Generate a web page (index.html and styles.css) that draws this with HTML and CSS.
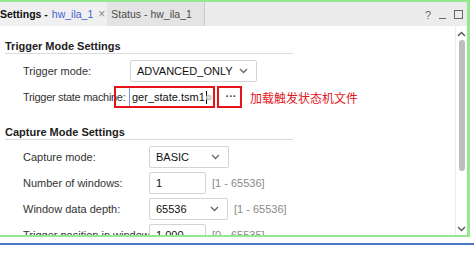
FILE: index.html
```html
<!DOCTYPE html>
<html lang="en">
<head>
    <meta charset="UTF-8">
    <title>Settings - hw_ila_1</title>
    <link rel="stylesheet" href="styles.css">
</head>
<body>
    <div class="window">
        <div class="tabbar">
            <div class="tab active">
                <b>Settings -</b><span class="tab-link">hw_ila_1</span><span class="tab-close">×</span>
            </div>
            <div class="tab">Status - hw_ila_1</div>
            <div class="tab-tools">
                <span class="help">?</span>
                <span class="minimize"></span>
                <span class="maximize"></span>
            </div>
        </div>

        <div class="pane">
            <div class="settings">
                <div class="section">
                    <div class="section-title">Trigger Mode Settings</div>
                    <div class="rows rows-trigger">
                        <label>Trigger mode:</label>
                        <div class="cell">
                            <div class="select w-mode">ADVANCED_ONLY
                                <svg class="chevron" width="9" height="6" viewBox="0 0 9 6"><path d="M1 1l3.5 3.5L8 1" fill="none" stroke="#666" stroke-width="1.3"/></svg>
                            </div>
                        </div>

                        <label class="label-tight">Trigger state machine:</label>
                        <div class="cell file-cell">
                            <div class="path-input">
                                <span class="path-text">ger_state.tsm1</span><span class="caret"></span>
                                <svg class="clear" width="11" height="11" viewBox="0 0 11 11"><circle cx="5.5" cy="5.5" r="5.5" fill="#c6c6c6"/><path d="M3.3 3.3l4.4 4.4M7.7 3.3l-4.4 4.4" stroke="#fff" stroke-width="1.4"/></svg>
                            </div>
                            <div class="browse-btn">···</div>
                            <span class="note">加载触发状态机文件</span>
                            <div class="mark mark-path"></div>
                            <div class="mark mark-browse"></div>
                        </div>
                    </div>
                </div>

                <div class="section">
                    <div class="section-title">Capture Mode Settings</div>
                    <div class="rows rows-capture">
                        <label>Capture mode:</label>
                        <div class="cell">
                            <div class="select w-capture">BASIC
                                <svg class="chevron" width="9" height="6" viewBox="0 0 9 6"><path d="M1 1l3.5 3.5L8 1" fill="none" stroke="#666" stroke-width="1.3"/></svg>
                            </div>
                        </div>

                        <label>Number of windows:</label>
                        <div class="cell">
                            <div class="text-input w-num">1</div>
                            <span class="range">[1 - 65536]</span>
                        </div>

                        <label>Window data depth:</label>
                        <div class="cell">
                            <div class="select w-depth">65536
                                <svg class="chevron" width="9" height="6" viewBox="0 0 9 6"><path d="M1 1l3.5 3.5L8 1" fill="none" stroke="#666" stroke-width="1.3"/></svg>
                            </div>
                            <span class="range">[1 - 65536]</span>
                        </div>

                        <label>Trigger position in window:</label>
                        <div class="cell">
                            <div class="text-input w-num">1,000</div>
                            <span class="range">[0 - 65535]</span>
                        </div>
                    </div>
                </div>
            </div>

            <div class="scrollbar">
                <svg class="arrow" width="9" height="6" viewBox="0 0 9 6"><path d="M1 5l3.5-3.5L8 5" fill="none" stroke="#555" stroke-width="1.4"/></svg>
                <div class="thumb"></div>
                <div class="track"></div>
                <svg class="arrow" width="9" height="6" viewBox="0 0 9 6"><path d="M1 1l3.5 3.5L8 1" fill="none" stroke="#555" stroke-width="1.4"/></svg>
            </div>
        </div>
    </div>
    <div class="dock-edge"></div>
</body>
</html>
```

FILE: styles.css
```css
/* Base */
body, html {
    margin: 0;
    padding: 0;
    background-color: #ffffff;
    font-family: "Liberation Sans", Arial, "Noto Sans CJK SC", sans-serif;
    font-size: 11px;
    color: #333;
    overflow: hidden;
}

.window {
    box-sizing: border-box;
    width: 470px;
    height: 237px;
    border-top: 2px solid #92e992;
    border-right: 3px solid #92e992;
    border-bottom: 2px solid #92e992;
    display: flex;
    flex-direction: column;
}

/* Tab bar */
.tabbar {
    height: 24px;
    display: flex;
    align-items: stretch;
    font-size: 10.5px;
    background-color: #ececec;
}

.tab {
    display: flex;
    align-items: center;
    padding: 0 12px 0 4px;
    color: #4a4a4a;
    background-color: #e4e4e4;
    border-right: 1px solid #c8c8c8;
}

.tab.active {
    padding: 0 2px 0 0;
    color: #111;
    background-color: #f0f0f0;
    border-right: none;
}

.tab-link {
    margin-left: 4px;
    color: #3d62d0;
}

.tab-close {
    margin-left: 5px;
    color: #888;
    font-size: 12px;
}

.tab-tools {
    margin-left: auto;
    display: flex;
    align-items: center;
    gap: 8px;
    padding-right: 4px;
    color: #666;
}

.help {
    font-size: 11px;
    margin-top: 2px;
}

.minimize {
    width: 7px;
    height: 1px;
    margin-top: 8px;
    background-color: #666;
}

.maximize {
    box-sizing: border-box;
    width: 9px;
    height: 9px;
    border: 1.5px solid #666;
}

/* Content pane */
.pane {
    flex: 1;
    display: flex;
    overflow: hidden;
    background-color: #ffffff;
}

.settings {
    flex: 1;
    padding-top: 13px;
    overflow: hidden;
}

.section + .section {
    margin-top: 17px;
}

.section-title {
    width: 288px;
    margin-left: 5px;
    line-height: 14px;
    font-weight: bold;
    color: #222;
    border-bottom: 1px solid #dcdcdc;
}

.rows {
    display: grid;
    row-gap: 4px;
    margin-top: 6px;
    padding-left: 23px;
}

.rows-trigger {
    grid-template-columns: 107px auto;
}

.rows-capture {
    grid-template-columns: 126px auto;
}

.rows label {
    line-height: 22px;
    color: #333;
    white-space: nowrap;
}

.rows .label-tight {
    letter-spacing: -0.3px;
}

.cell {
    display: flex;
    align-items: center;
    height: 22px;
}

.select,
.text-input {
    box-sizing: border-box;
    height: 22px;
    display: flex;
    align-items: center;
    padding-left: 6px;
    border: 1px solid #d4d4d4;
    border-radius: 2px;
    color: #111;
    background-color: #ffffff;
}

.chevron {
    margin-left: auto;
    margin-right: 8px;
}

.w-mode { width: 127px; }
.w-capture { width: 80px; }
.w-depth { width: 79px; }
.w-num { width: 57px; }

.range {
    margin-left: 6px;
    color: #8a8a8a;
}

/* File chooser row */
.file-cell {
    position: relative;
}

.path-input {
    box-sizing: border-box;
    width: 86px;
    height: 22px;
    margin-left: -1px;
    display: flex;
    align-items: center;
    padding-left: 2px;
    border: 1px solid #7d9be0;
    border-top-color: #e4e9f6;
    color: #111;
    background-color: #ffffff;
}

.caret {
    width: 1px;
    height: 13px;
    margin-left: 1px;
    background-color: #111;
}

.clear {
    margin-left: auto;
    margin-right: 2px;
}

.browse-btn {
    box-sizing: border-box;
    width: 22px;
    height: 20px;
    margin-left: 5px;
    text-align: center;
    line-height: 18px;
    color: #444;
    font-weight: bold;
}

.note {
    margin-left: 8px;
    font-size: 12px;
    color: #e3161c;
    white-space: nowrap;
}

/* red annotation boxes drawn over the row */
.mark {
    position: absolute;
    top: 0;
    height: 22px;
    box-sizing: border-box;
    border: 2px solid #e5141b;
}

.mark-path {
    left: -16px;
    width: 101px;
}

.mark-browse {
    left: 87px;
    width: 25px;
}

/* Scrollbar */
.scrollbar {
    width: 11px;
    display: flex;
    flex-direction: column;
    align-items: center;
    border-left: 1px solid #ececec;
    padding: 5px 0 3px;
}

.thumb {
    width: 6px;
    height: 131px;
    margin-top: 3px;
    border-radius: 3px;
    background-color: #bdbdbd;
}

.track {
    flex: 1;
}

.dock-edge {
    height: 2px;
    margin-top: 6px;
    background-color: #4a77c6;
}
```
